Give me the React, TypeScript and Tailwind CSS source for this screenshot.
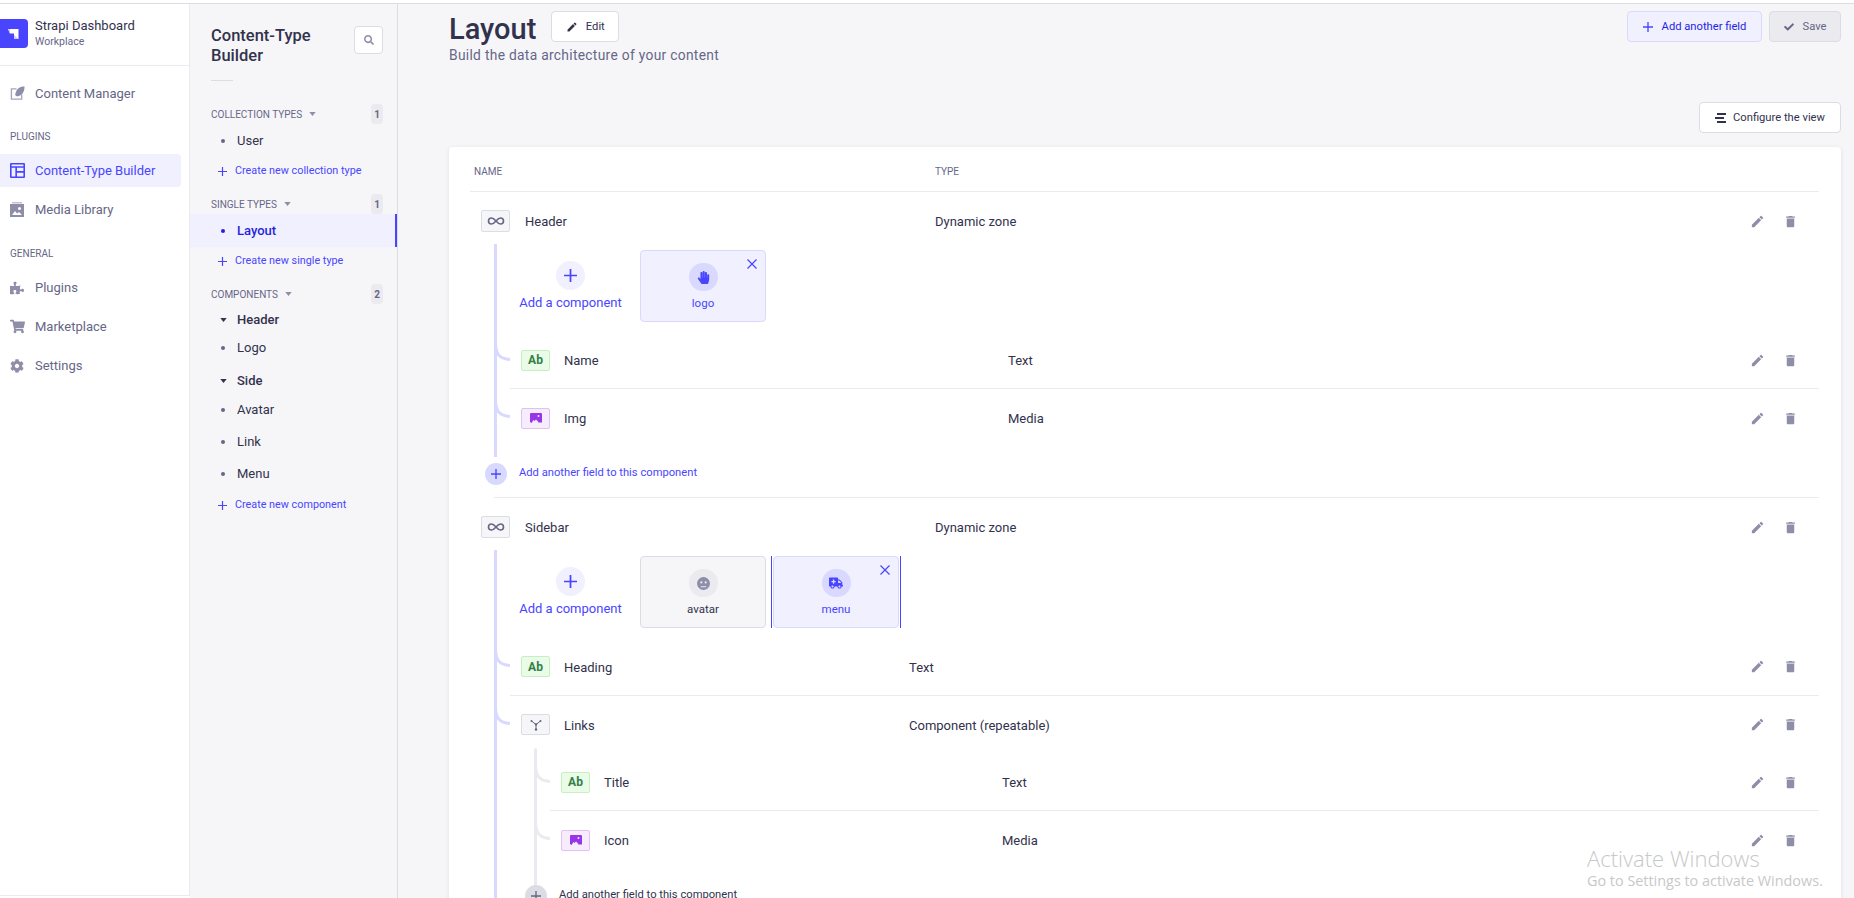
import type { ReactNode } from 'react'
import { Infinity as InfinityIcon } from 'lucide-react'
import { FaAmbulance, FaCheck, FaCog, FaHandPaper, FaPuzzlePiece, FaSearch, FaShoppingCart } from 'react-icons/fa'

function Pencil({ className }: { className: string }) {
  return (
    <svg viewBox="0 0 24 24" fill="currentColor" className={className}>
      <path d="M3 17.25V21h3.75L17.81 9.94l-3.75-3.75L3 17.25zM20.71 7.04a1 1 0 0 0 0-1.41l-2.34-2.34a1 1 0 0 0-1.41 0l-1.83 1.83 3.75 3.75 1.83-1.83z" />
    </svg>
  )
}

function Trash() {
  return (
    <svg viewBox="0 0 24 24" fill="currentColor" className="h-[15px] w-[15px]">
      <path d="M6 19c0 1.1.9 2 2 2h8c1.1 0 2-.9 2-2V7H6v12zM19 4h-3.5l-1-1h-5l-1 1H5v2h14V4z" />
    </svg>
  )
}

function Plus({ className }: { className: string }) {
  return (
    <svg viewBox="0 0 12 12" fill="currentColor" className={className}>
      <path d="M5.2 0h1.6v5.2H12v1.6H6.8V12H5.2V6.8H0V5.2h5.2z" />
    </svg>
  )
}

function Caret({ className }: { className: string }) {
  return (
    <svg viewBox="0 0 8 5" fill="currentColor" className={className}>
      <path d="M0 0h8L4 5z" />
    </svg>
  )
}

function Close() {
  return (
    <svg viewBox="0 0 10 10" stroke="currentColor" strokeWidth="1.2" className="absolute right-[8px] top-[8px] h-[10px] w-[10px] text-[#4945ff]">
      <path d="M.5.5l9 9M9.5.5l-9 9" />
    </svg>
  )
}

function MediaGlyph() {
  return (
    <svg viewBox="0 0 12 10" fill="currentColor" className="h-[10px] w-[12px]">
      <path fillRule="evenodd" d="M1 0h10a1 1 0 0 1 1 1v8l-1 1-1-1-1 1-1.500-2L6 6.500 4.500 8 3.500 7 1.500 10 0 9V1a1 1 0 0 1 1-1zm7.500 2a1 1 0 1 0 0 2 1 1 0 0 0 0-2z" />
    </svg>
  )
}

function TextBadge() {
  return (
    <div className="flex h-[21px] w-[29px] shrink-0 items-center justify-center rounded-[2px] border border-[#c6f0c2] bg-[#eafbe7] text-[12px] font-bold text-[#328048]">
      Ab
    </div>
  )
}

function MediaBadge() {
  return (
    <div className="flex h-[21px] w-[29px] shrink-0 items-center justify-center rounded-[2px] border border-[#e0c1f4] bg-[#f6ecfc] text-[#9736e8]">
      <MediaGlyph />
    </div>
  )
}

function DynamicBadge() {
  return (
    <div className="flex h-[22px] w-[29px] shrink-0 items-center justify-center rounded-[2px] border border-[#dcdce4] bg-[#f6f6f9] text-[#666687]">
      <InfinityIcon className="h-[18px] w-[18px]" strokeWidth={2.2} />
    </div>
  )
}

function ComponentBadge() {
  return (
    <div className="flex h-[21px] w-[29px] shrink-0 items-center justify-center rounded-[2px] border border-[#dcdce4] bg-[#f6f6f9] text-[#666687]">
      <svg viewBox="0 0 12 12" className="h-[12px] w-[12px]" fill="currentColor" stroke="currentColor">
        <path d="M1.500 2L6 5.500 10.500 2M6 5.500V10" fill="none" strokeWidth="1" />
        <circle cx="1.500" cy="2" r="1" strokeWidth="0" />
        <circle cx="10.500" cy="2" r="1" strokeWidth="0" />
        <circle cx="6" cy="10.500" r="1.200" strokeWidth="0" />
        <circle cx="6" cy="5.500" r="1.200" strokeWidth="0" />
      </svg>
    </div>
  )
}

function Actions() {
  return (
    <div className="ml-auto flex items-center gap-[18px] pr-[21px] text-[#8e8ea9]">
      <Pencil className="h-[15px] w-[15px]" />
      <Trash />
    </div>
  )
}

// branch from the vertical guide line into a field row
function Connector({ color }: { color: string }) {
  return (
    <svg viewBox="0 0 16 19" fill="none" stroke={color} strokeWidth="3" className="absolute -left-[16px] top-[10px] h-[19px] w-[16px]">
      <path d="M1.500 0c0 11 3 17 14.500 17.500" />
    </svg>
  )
}

type FieldProps = {
  badge: ReactNode
  name: string
  type: string
  nameWidth: string
  rowHeight: string
  divider?: boolean
  connectorColor: string
}

function FieldRow({ badge, name, type, nameWidth, rowHeight, divider, connectorColor }: FieldProps) {
  return (
    <div className={`relative flex items-center ${rowHeight} ${divider ? 'border-b border-[#eaeaef]' : ''}`}>
      <Connector color={connectorColor} />
      <div className="ml-[11px] flex w-full items-center">
        {badge}
        <span className={`ml-[14px] shrink-0 pt-[2px] text-[13px] text-[#32324d] ${nameWidth}`}>{name}</span>
        <span className="pt-[2px] text-[13px] text-[#32324d]">{type}</span>
        <Actions />
      </div>
    </div>
  )
}

function ZoneRow({ name }: { name: string }) {
  return (
    <div className="flex h-[58px] items-center pl-[11px]">
      <DynamicBadge />
      <span className="ml-[15px] w-[410px] shrink-0 pt-[2px] text-[13px] text-[#32324d]">{name}</span>
      <span className="pt-[2px] text-[13px] text-[#32324d]">Dynamic zone</span>
      <Actions />
    </div>
  )
}

function AddComponent() {
  return (
    <div className="flex w-[125px] flex-col items-center pt-[11px]">
      <div className="flex h-[29px] w-[29px] items-center justify-center rounded-full bg-[#f0f0ff] text-[#4945ff]">
        <Plus className="h-[13px] w-[13px]" />
      </div>
      <span className="mt-[3px] whitespace-nowrap text-[13px] text-[#4945ff]">Add a component</span>
    </div>
  )
}

function ZoneCard({ label, icon, active }: { label: string; icon: ReactNode; active?: boolean }) {
  return (
    <div
      className={`relative flex h-[72px] w-[126px] flex-col items-center rounded-[4px] border pt-[12px] ${
        active ? 'border-[#d9d8ff] bg-[#f0f0ff] text-[#4945ff]' : 'border-[#dcdce4] bg-[#f6f6f9] text-[#32324d]'
      }`}
    >
      {active && <Close />}
      <div className={`flex h-[28px] w-[29px] items-center justify-center rounded-full ${active ? 'bg-[#d9d8ff]' : 'bg-[#eaeaef]'}`}>{icon}</div>
      <span className="mt-[4px] text-[11.500px]">{label}</span>
    </div>
  )
}

function AddFieldRow({ muted }: { muted?: boolean }) {
  return (
    <div className="flex h-[50px] items-center pt-[3px]">
      <div className={`relative z-10 -ml-[10px] flex h-[22px] w-[22px] shrink-0 items-center justify-center rounded-full ${muted ? 'bg-[#dcdce4] text-[#666687]' : 'bg-[#d9d8ff] text-[#4945ff]'}`}>
        <Plus className="h-[10px] w-[10px]" />
      </div>
      <span className={`ml-[12px] text-[11.200px] ${muted ? 'text-[#32324d]' : 'text-[#4945ff]'}`}>Add another field to this component</span>
    </div>
  )
}

function NavItem({ icon, label, active }: { icon: ReactNode; label: string; active?: boolean }) {
  return (
    <div className={`flex h-[33px] w-[181px] items-center rounded-r-[4px] pl-[10px] text-[13px] ${active ? 'bg-[#f0f0ff] text-[#4945ff]' : 'text-[#666687]'}`}>
      <span className={`flex w-[25px] ${active ? 'text-[#4945ff]' : 'text-[#8e8ea9]'}`}>{icon}</span>
      {label}
    </div>
  )
}

function SubHeading({ label, count, className }: { label: string; count: number; className: string }) {
  return (
    <div className={`flex items-center justify-between pl-[21px] pr-[14px] ${className}`}>
      <div className="flex items-center gap-[7px] text-[10px] text-[#666687]">
        {label}
        <Caret className="h-[4px] w-[7px] text-[#8e8ea9]" />
      </div>
      <span className="flex h-[20px] w-[12px] items-center justify-center rounded-[4px] bg-[#eaeaef] text-[10px] font-bold text-[#666687]">{count}</span>
    </div>
  )
}

function SubItem({ label, caret, className }: { label: string; caret?: boolean; className: string }) {
  return (
    <div className={`flex items-center pl-[30px] text-[13px] text-[#32324d] ${className}`}>
      <span className="flex w-[16px]">
        {caret ? <Caret className="h-[4px] w-[7px] text-[#32324d]" /> : <span className="ml-[1px] h-[4px] w-[4px] rounded-full bg-[#666687]" />}
      </span>
      <span className={`ml-[1px] ${caret ? 'font-medium' : ''}`}>{label}</span>
    </div>
  )
}

function CreateLink({ label, className }: { label: string; className: string }) {
  return (
    <div className={`flex items-center pl-[28px] text-[10.800px] text-[#4945ff] ${className}`}>
      <Plus className="mr-[8px] h-[9px] w-[9px]" />
      {label}
    </div>
  )
}

export default function App() {
  return (
    <div className="relative flex h-screen flex-col overflow-hidden bg-white font-['Roboto',sans-serif]">
      <div className="h-[4px] shrink-0 border-b border-[#dcdce4] bg-white" />
      <div className="flex min-h-0 flex-1">
        {/* Main nav */}
        <aside className="mb-[2px] w-[190px] shrink-0 border-b border-r border-[#eaeaef] bg-white">
          <div className="flex h-[62px] items-center border-b border-[#eaeaef] pb-[3px]">
            <div className="flex h-[29px] w-[28px] items-center justify-center rounded-r-[4px] bg-[#4945ff]">
              <svg viewBox="0 0 12 12" className="h-[12px] w-[12px]">
                <path d="M0 2h10.500v10H6V6.500H2z" fill="#ffffff" />
                <path d="M2 2v4.500L0 2zM6 12h4.500L6 8z" fill="#c9c8ff" />
              </svg>
            </div>
            <div className="ml-[7px]">
              <div className="text-[13px] leading-[18px] text-[#32324d]">Strapi Dashboard</div>
              <div className="text-[10.500px] leading-[14px] text-[#666687]">Workplace</div>
            </div>
          </div>
          <div className="mt-[11px]">
            <NavItem
              label="Content Manager"
              icon={
                <svg viewBox="0 0 16 16" className="h-[15px] w-[15px]" fill="none">
                  <path d="M7 3H1.500v11h11V9" stroke="#a5a5ba" strokeWidth="1.400" />
                  <path d="M15.500 .5c-5.500 0-9 2.500-10 9l1.500 1.500c5.500 0 8.500-4.500 8.500-10.500z" fill="#8e8ea9" />
                </svg>
              }
            />
          </div>
          <div className="mt-[19px] pl-[10px] text-[10px] text-[#666687]">PLUGINS</div>
          <div className="mt-[10px]">
            <NavItem
              active
              label="Content-Type Builder"
              icon={
                <svg viewBox="0 0 14 14" className="h-[15px] w-[15px]" fill="currentColor">
                  <path fillRule="evenodd" d="M1 0h12a1 1 0 0 1 1 1v12a1 1 0 0 1-1 1H1a1 1 0 0 1-1-1V1a1 1 0 0 1 1-1zm.500 4.500v8h3.500v-8zm5 0v3h6v-3zm0 4.500v3.500h6V9zM1.500 1.500V3h11V1.500z" />
                </svg>
              }
            />
          </div>
          <div className="mt-[6px]">
            <NavItem
              label="Media Library"
              icon={
                <svg viewBox="0 0 14 15" className="h-[15px] w-[14px]" fill="currentColor">
                  <path d="M2 0h10v1.500H2z" fill="#c0c0cf" />
                  <path fillRule="evenodd" d="M0 2h14v13H0zm9.500 3a1.500 1.500 0 1 0 0 3 1.500 1.500 0 0 0 0-3zM2 13h10l-3-3-2 1.500L5 9z" />
                </svg>
              }
            />
          </div>
          <div className="mt-[20px] pl-[10px] text-[10px] text-[#666687]">GENERAL</div>
          <div className="mt-[10px] flex flex-col gap-[6px]">
            <NavItem label="Plugins" icon={<FaPuzzlePiece className="h-[14px] w-[14px]" />} />
            <NavItem label="Marketplace" icon={<FaShoppingCart className="h-[15px] w-[15px]" />} />
            <NavItem label="Settings" icon={<FaCog className="h-[14px] w-[14px]" />} />
          </div>
        </aside>

        {/* Sub nav */}
        <aside className="w-[208px] shrink-0 border-r border-[#dcdce4] bg-[#f6f6f9]">
          <div className="flex items-start justify-between pl-[21px] pr-[14px] pt-[22px]">
            <div className="text-[16.500px] font-medium leading-[20px] text-[#32324d]">
              Content-Type
              <br />
              Builder
            </div>
            <div className="flex h-[28px] w-[29px] items-center justify-center rounded-[4px] border border-[#dcdce4] bg-white text-[#8e8ea9]">
              <FaSearch className="h-[10px] w-[10px]" />
            </div>
          </div>
          <div className="ml-[21px] mt-[14px] h-[1px] w-[22px] bg-[#dcdce4]" />
          <SubHeading label="COLLECTION TYPES" count={1} className="mt-[23px]" />
          <SubItem label="User" className="mt-[6px] h-[22px]" />
          <CreateLink label="Create new collection type" className="mt-[9px] h-[20px]" />
          <SubHeading label="SINGLE TYPES" count={1} className="mt-[13px]" />
          <div className="flex h-[33px] items-center border-r-2 border-[#4945ff] bg-[#f0f0ff] pl-[30px] text-[13px] font-medium text-[#271fe0]">
            <span className="flex w-[16px]">
              <span className="ml-[1px] h-[4px] w-[4px] rounded-full bg-[#271fe0]" />
            </span>
            <span className="ml-[1px]">Layout</span>
          </div>
          <CreateLink label="Create new single type" className="mt-[4px] h-[20px]" />
          <SubHeading label="COMPONENTS" count={2} className="mt-[13px]" />
          <SubItem caret label="Header" className="mt-[5px] h-[22px]" />
          <SubItem label="Logo" className="mt-[6px] h-[22px]" />
          <SubItem caret label="Side" className="mt-[11px] h-[22px]" />
          <SubItem label="Avatar" className="mt-[7px] h-[22px]" />
          <SubItem label="Link" className="mt-[10px] h-[22px]" />
          <SubItem label="Menu" className="mt-[10px] h-[22px]" />
          <CreateLink label="Create new component" className="mt-[10px] h-[20px]" />
        </aside>

        {/* Main */}
        <main className="min-w-0 flex-1 bg-[#f6f6f9] pl-[51px] pr-[13px]">
          <div className="flex items-start justify-between pt-[7px]">
            <div>
              <div className="flex items-start">
                <h1 className="text-[29px] font-medium leading-[36px] text-[#32324d]">Layout</h1>
                <button className="ml-[15px] flex h-[31px] w-[68px] items-center justify-center gap-[8px] rounded-[4px] border border-[#dcdce4] bg-white pt-[1px] text-[11.200px] text-[#32324d]">
                  <Pencil className="h-[12px] w-[12px]" />
                  Edit
                </button>
              </div>
              <p className="-mt-[2px] text-[13.800px] leading-[20px] tracking-[0.3px] text-[#666687]">Build the data architecture of your content</p>
            </div>
            <div className="flex gap-[7px]">
              <button className="flex h-[31px] w-[135px] items-center justify-center gap-[9px] rounded-[4px] border border-[#d9d8ff] bg-[#f0f0ff] pt-[1px] text-[11.200px] text-[#271fe0]">
                <Plus className="h-[10px] w-[10px] text-[#4945ff]" />
                Add another field
              </button>
              <button className="flex h-[31px] w-[72px] items-center justify-center gap-[9px] rounded-[4px] border border-[#dcdce4] bg-[#eaeaef] pt-[1px] text-[11.200px] text-[#666687]">
                <FaCheck className="h-[10px] w-[10px]" />
                Save
              </button>
            </div>
          </div>
          <div className="mt-[37px] flex justify-end">
            <button className="flex h-[31px] w-[142px] items-center justify-center gap-[7px] rounded-[4px] border border-[#dcdce4] bg-white pt-[1px] text-[11.200px] text-[#32324d]">
              <span className="flex w-[11px] flex-col gap-[2px]">
                <span className="h-[2px] w-[9px] self-end bg-[#32324d]" />
                <span className="h-[2px] w-[9px] self-start bg-[#32324d]" />
                <span className="h-[2px] w-[9px] self-end bg-[#32324d]" />
              </span>
              Configure the view
            </button>
          </div>

          <div className="mt-[14px] rounded-t-[4px] bg-white pl-[21px] pr-[22px] shadow-[0_1px_4px_rgba(33,33,52,0.1)]">
            <div className="flex h-[45px] items-center border-b border-[#eaeaef] pl-[4px] pt-[4px] text-[10px] text-[#666687]">
              <span className="w-[461px]">NAME</span>
              <span>TYPE</span>
            </div>

            {/* Header zone */}
            <ZoneRow name="Header" />
            <div className="relative ml-[24px] border-b border-[#eaeaef]">
              <div className="absolute bottom-[40px] left-0 top-[-6px] w-[3px] bg-[#d9d8ff]" />
              <div className="flex gap-[7px] pl-[14px]">
                <AddComponent />
                <ZoneCard active label="logo" icon={<FaHandPaper className="h-[13px] w-[13px] text-[#4945ff]" />} />
              </div>
              <div className="ml-[16px] mt-[10px]">
                <FieldRow badge={<TextBadge />} name="Name" type="Text" nameWidth="w-[444px]" rowHeight="h-[57px]" divider connectorColor="#d9d8ff" />
                <FieldRow badge={<MediaBadge />} name="Img" type="Media" nameWidth="w-[444px]" rowHeight="h-[58px]" connectorColor="#d9d8ff" />
              </div>
              <div className="pl-[1px]">
                <AddFieldRow />
              </div>
            </div>

            {/* Sidebar zone */}
            <ZoneRow name="Sidebar" />
            <div className="relative ml-[24px]">
              <div className="absolute bottom-0 left-0 top-[-6px] w-[3px] bg-[#d9d8ff]" />
              <div className="flex gap-[7px] pl-[14px]">
                <AddComponent />
                <ZoneCard label="avatar" icon={
                  <svg viewBox="0 0 12 12" className="h-[13px] w-[13px] text-[#8e8ea9]" fill="currentColor">
                    <path fillRule="evenodd" d="M6 0a6 6 0 1 1 0 12A6 6 0 0 1 6 0zM4 4a1 1 0 1 0 0 2 1 1 0 0 0 0-2zm4 0a1 1 0 1 0 0 2 1 1 0 0 0 0-2zM3.500 8.500v1h5v-1z" />
                  </svg>
                } />
                <div className="-ml-[2px] border-x border-[#4945ff] px-[1px]">
                  <ZoneCard active label="menu" icon={<FaAmbulance className="h-[14px] w-[14px] text-[#4945ff]" />} />
                </div>
              </div>
              <div className="ml-[16px] mt-[10px]">
                <FieldRow badge={<TextBadge />} name="Heading" type="Text" nameWidth="w-[345px]" rowHeight="h-[58px]" divider connectorColor="#d9d8ff" />
                <FieldRow badge={<ComponentBadge />} name="Links" type="Component (repeatable)" nameWidth="w-[345px]" rowHeight="h-[57px]" connectorColor="#d9d8ff" />
              </div>
              <div className="relative ml-[40px]">
                <div className="absolute bottom-[10px] left-0 top-[-5px] w-[3px] rounded-full bg-[#eaeaef]" />
                <div className="ml-[16px] pt-[1px]">
                  <FieldRow badge={<TextBadge />} name="Title" type="Text" nameWidth="w-[398px]" rowHeight="h-[57px]" divider connectorColor="#eaeaef" />
                  <FieldRow badge={<MediaBadge />} name="Icon" type="Media" nameWidth="w-[398px]" rowHeight="h-[58px]" connectorColor="#eaeaef" />
                </div>
                <div className="pl-[1px]">
                  <AddFieldRow muted />
                </div>
              </div>
            </div>
          </div>
        </main>
      </div>

      {/* Windows activation watermark */}
      <div className="pointer-events-none absolute left-[1587px] top-[845px] font-['Open_Sans',sans-serif] text-[#c8c8c8]">
        <div className="text-[22px] font-light leading-[26px]">Activate Windows</div>
        <div className="text-[14.400px] leading-[20px]">Go to Settings to activate Windows.</div>
      </div>
    </div>
  )
}
